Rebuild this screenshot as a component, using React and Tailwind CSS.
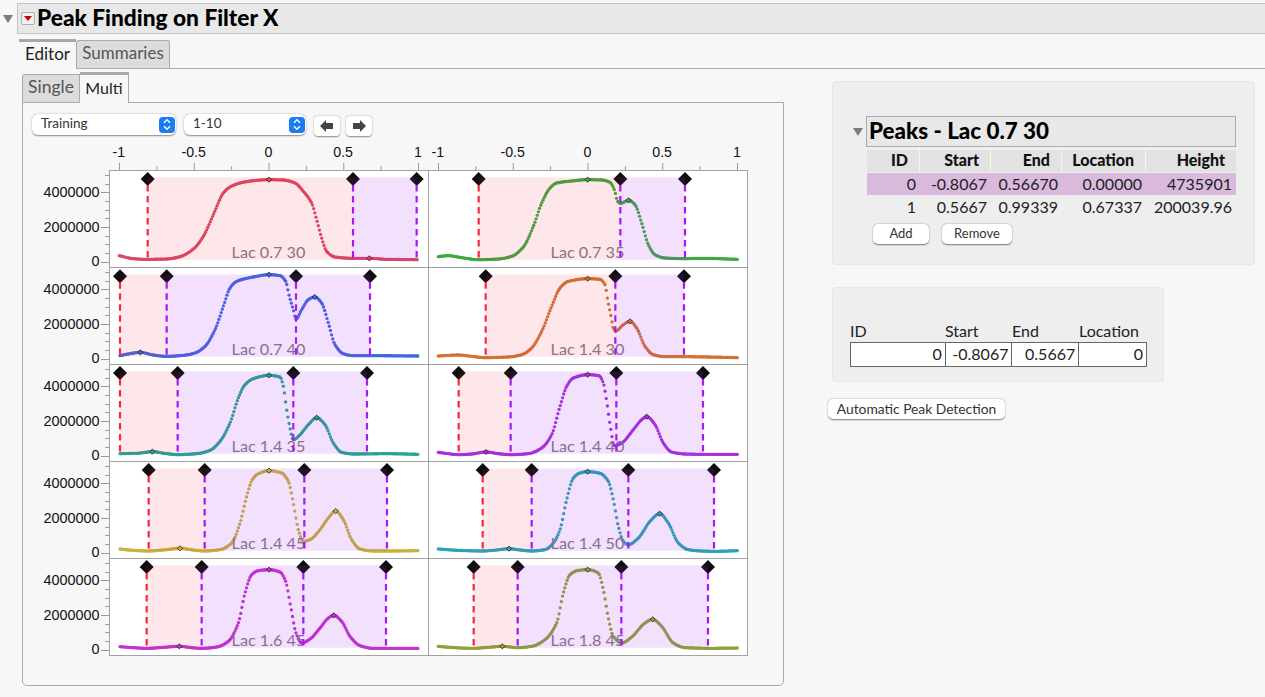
import React from 'react';

const PURPLE = '#a818f5';
const RED = '#f5283f';

// curve points traced at 3x from the plot area, ox/oy move them to the cell origin
const PLOTS = [
  {
    label: 'Lac 0.7 30', color: '#d84a64', ox: 267, oy: 31, marks: [383, 999, 1190], dy: 58,
    peaks: [[747, 60], [1048, 296]],
    pts: [[298,288],[340,297],[380,299],[440,298],[480,291],[520,268],[550,230],[580,165],[610,100],[630,82],[660,70],[700,63],[747,60],[790,61],[825,70],[850,95],[875,130],[890,180],[905,235],[920,275],[945,292],[1000,296],[1048,296],[1100,299],[1192,300]],
  },
  {
    label: 'Lac 0.7 35', color: '#3fa83f', ox: 9, oy: 31, marks: [161, 586, 780], dy: 58,
    peaks: [[488, 60], [611, 122]],
    pts: [[40,291],[70,288],[110,294],[161,300],[220,298],[260,290],[295,262],[325,200],[350,130],[375,85],[395,70],[440,64],[488,60],[530,61],[555,68],[568,90],[578,125],[586,131],[611,122],[630,135],[650,190],[670,255],[690,285],[720,295],[780,297],[830,296],[938,299]],
  },
  {
    label: 'Lac 0.7 40', color: '#4169dc', ox: 267, oy: 322, marks: [300, 440, 828, 1050], dy: 350,
    peaks: [[747, 345], [361, 578], [884, 412]],
    pts: [[300,588],[330,582],[361,578],[400,586],[440,590],[490,587],[525,580],[555,560],[585,510],[610,440],[630,385],[650,365],[700,352],[747,345],[780,348],[797,365],[808,410],[820,450],[828,478],[845,450],[865,420],[884,412],[905,430],[925,490],[945,555],[970,582],[1000,588],[1050,588],[1195,589]],
  },
  {
    label: 'Lac 1.4 30', color: '#d07434', ox: 9, oy: 322, marks: [182, 571, 777], dy: 350,
    peaks: [[488, 357], [615, 485]],
    pts: [[40,589],[100,586],[140,590],[182,594],[250,592],[290,585],[320,565],[350,515],[380,440],[405,385],[430,365],[488,357],[525,359],[540,375],[548,420],[558,470],[565,505],[572,514],[595,495],[615,485],[635,505],[660,560],[685,585],[720,591],[777,591],[850,592],[938,594]],
  },
  {
    label: 'Lac 1.4 35', color: '#26a594', ox: 267, oy: 13, marks: [300, 473, 820, 1041], dy: 40,
    peaks: [[747, 47], [397, 276], [890, 174]],
    pts: [[300,282],[350,281],[397,276],[440,282],[473,285],[530,282],[570,272],[600,245],[630,190],[655,115],[675,75],[700,57],[747,47],[780,52],[790,80],[800,150],[810,205],[820,240],[840,225],[865,195],[890,174],[915,195],[940,250],[965,278],[1000,283],[1100,282],[1195,284]],
  },
  {
    label: 'Lac 1.4 40', color: '#a433dc', ox: 9, oy: 13, marks: [101, 257, 574, 834], dy: 40,
    peaks: [[488, 45], [183, 277], [665, 171]],
    pts: [[40,278],[70,282],[101,285],[140,283],[183,277],[220,282],[257,285],[310,282],[350,265],[380,225],[405,140],[425,80],[445,55],[488,45],[522,48],[535,70],[545,125],[556,200],[568,258],[590,250],[625,210],[650,180],[665,171],[690,195],[715,250],[740,277],[780,283],[834,284],[938,284]],
  },
  {
    label: 'Lac 1.4 45', color: '#c6b43a', ox: 267, oy: 304, marks: [386, 554, 853, 1101], dy: 331,
    peaks: [[747, 333], [480, 566], [947, 454]],
    pts: [[300,568],[340,572],[386,574],[430,571],[480,566],[520,571],[554,574],[600,570],[635,550],[660,490],[680,410],[697,360],[715,342],[747,333],[785,340],[805,365],[820,430],[835,510],[850,545],[870,540],[900,510],[925,475],[947,454],[970,480],[995,540],[1020,568],[1060,574],[1101,574],[1195,573]],
  },
  {
    label: 'Lac 1.4 50', color: '#2ba4b4', ox: 9, oy: 304, marks: [173, 320, 610, 867], dy: 331,
    peaks: [[488, 336], [252, 567], [704, 462]],
    pts: [[40,568],[100,572],[173,574],[215,571],[252,567],[285,571],[320,574],[360,570],[385,550],[405,510],[425,420],[445,355],[465,340],[488,336],[525,341],[550,365],[565,420],[580,500],[595,545],[610,555],[640,535],[675,485],[704,462],[730,490],[760,550],[790,570],[830,574],[867,575],[938,573]],
  },
  {
    label: 'Lac 1.6 45', color: '#c433cc', ox: 267, oy: 595, marks: [380, 545, 850, 1098], dy: 622,
    peaks: [[747, 630], [478, 860], [941, 767]],
    pts: [[300,861],[340,864],[380,866],[430,863],[478,860],[515,864],[545,866],[590,862],[625,845],[655,790],[675,700],[695,645],[715,633],[747,630],[780,637],[797,665],[812,740],[828,820],[845,850],[870,838],[900,805],[925,775],[941,767],[965,785],[990,830],[1020,858],[1060,866],[1195,866]],
  },
  {
    label: 'Lac 1.8 45', color: '#8ca43a', ox: 9, oy: 595, marks: [146, 278, 589, 849], dy: 622,
    peaks: [[488, 630], [232, 860], [683, 779]],
    pts: [[40,860],[90,864],[146,866],[190,863],[232,860],[278,864],[320,860],[360,840],[395,790],[415,700],[435,645],[460,632],[488,630],[520,640],[535,690],[550,775],[565,830],[590,850],[620,832],[660,790],[683,779],[710,800],[745,850],[780,864],[849,866],[938,865]],
  },
];

// monotone cubic, sampled about once per pixel so steep parts break up into dots
function sampleCurve(pts) {
  const n = pts.length;
  const slopes = [];
  for (let i = 0; i < n - 1; i++) {
    slopes.push((pts[i + 1][1] - pts[i][1]) / (pts[i + 1][0] - pts[i][0]));
  }
  const tan = pts.map((_, i) => {
    if (i === 0) return slopes[0];
    if (i === n - 1) return slopes[n - 2];
    if (slopes[i - 1] * slopes[i] <= 0) return 0;
    return (2 * slopes[i - 1] * slopes[i]) / (slopes[i - 1] + slopes[i]);
  });
  const out = [];
  let seg = 0;
  for (let x = pts[0][0]; x <= pts[n - 1][0]; x += 1.15) {
    while (seg < n - 2 && x > pts[seg + 1][0]) seg++;
    const h = pts[seg + 1][0] - pts[seg][0];
    const t = (x - pts[seg][0]) / h;
    const y =
      (2 * t ** 3 - 3 * t ** 2 + 1) * pts[seg][1] +
      (t ** 3 - 2 * t ** 2 + t) * h * tan[seg] +
      (-2 * t ** 3 + 3 * t ** 2) * pts[seg + 1][1] +
      (t ** 3 - t ** 2) * h * tan[seg + 1];
    out.push([x, y]);
  }
  return out;
}

function Plot({ plot }) {
  const px = (x) => (x - plot.ox) / 3;
  const py = (y) => (y - plot.oy) / 3;
  const xs = plot.marks.map(px);
  const dy = py(plot.dy);
  const raw = plot.pts.map(([x, y]) => [x / 3, y / 3]);
  const dots = sampleCurve(raw).map(([x, y], i) => (
    <circle key={i} cx={x - plot.ox / 3} cy={y - plot.oy / 3} r="1.65" fill={plot.color} />
  ));
  return (
    <svg width="319" height="97" className="block overflow-visible bg-white">
      {dots}
      {xs.map((x) => (
        <polygon key={x} points={`${x - 7},${dy} ${x},${dy - 7} ${x + 7},${dy} ${x},${dy + 7}`} fill="#0d0d0d" />
      ))}
      <text x="159.5" y="88" textAnchor="middle" className="[font-family:Lato,sans-serif]" fontSize="16.2" fill="#857a86">{plot.label}</text>
      <rect x={xs[0]} y="7.4" width={xs[1] - xs[0]} height="82.4" fill="#f5283f" fillOpacity="0.11" />
      {xs.slice(1, -1).map((x, i) => (
        <rect key={x} x={x} y="7.4" width={xs[i + 2] - x} height="82.4" fill="#a020f0" fillOpacity="0.14" />
      ))}
      {xs.map((x, i) => (
        <line key={x} x1={x} x2={x} y1={dy + 6} y2="91.5" stroke={i === 0 ? RED : PURPLE} strokeWidth="2.2" strokeDasharray="6.5 4.5" />
      ))}
      {plot.peaks.map(([x, y]) => (
        <polygon key={x} points={`${px(x) - 2.6},${py(y)} ${px(x)},${py(y) - 2.6} ${px(x) + 2.6},${py(y)} ${px(x)},${py(y) + 2.6}`} fill={plot.color} stroke="#222" strokeWidth="0.8" />
      ))}
      <rect x="0.5" y="0.5" width="319" height="97" fill="none" stroke="#a3a3a3" />
    </svg>
  );
}

function XAxis() {
  const ticks = [-1, -0.75, -0.5, -0.25, 0, 0.25, 0.5, 0.75, 1];
  return (
    <svg width="319" height="30" className="block overflow-visible">
      {ticks.map((t) => {
        const x = 10.5 + (t + 1) * 149.5;
        const major = t * 2 === Math.round(t * 2);
        return (
          <g key={t}>
            <line x1={x} x2={x} y1={major ? 23 : 26} y2="30" stroke="#999" />
            {major && (
              <text x={x - 0.6} y="16.5" textAnchor="middle" fontSize="14.2" fill="#111" className="[font-family:'Liberation_Sans',sans-serif]">{t}</text>
            )}
          </g>
        );
      })}
    </svg>
  );
}

function YAxis() {
  const rows = [0, 1, 2, 3, 4];
  return (
    <svg width="70" height="486" className="block overflow-visible">
      {rows.map((r) => {
        const y0 = r * 97 + 91.5;
        const ticks = [];
        for (let i = 0; i <= 10; i++) {
          const y = Math.round(y0 - i * 8.65) + 0.5;
          ticks.push(<line key={i} x1={i % 4 === 0 ? 62 : 66} x2="70" y1={y} y2={y} stroke="#999" />);
        }
        return (
          <g key={r}>
            {ticks}
            {['0', '2000000', '4000000'].map((label, i) => (
              <text key={label} x="60.5" y={y0 - i * 34.7 + 4.8} textAnchor="end" fontSize="14.4" fill="#111" className="[font-family:'Liberation_Sans',sans-serif]">{label}</text>
            ))}
          </g>
        );
      })}
    </svg>
  );
}

function Disclosure({ className }) {
  return (
    <svg width="10" height="8" viewBox="0 0 10 8" className={className}>
      <polygon points="0,0 10,0 5,8" fill="#7b7b7b" />
    </svg>
  );
}

function Select({ value, width }) {
  return (
    <div className={`flex h-[21px] items-center justify-between rounded-[6px] bg-white pl-[9px] pr-[1px] text-[13.5px] text-[#333] shadow-[0_0.5px_1.5px_rgba(0,0,0,0.45)] ${width}`}>
      <span className="-mt-[2px]">{value}</span>
      <span className="flex h-[16px] w-[16px] items-center justify-center rounded-[4px] bg-[#1a7bf5]">
        <svg width="8" height="13" viewBox="0 0 8 13" fill="none" stroke="white" strokeWidth="1.4">
          <path d="M1 4.8 4 1.8l3 3M1 8.2l3 3 3-3" />
        </svg>
      </span>
    </div>
  );
}

function ArrowBtn({ dir }) {
  return (
    <button className="flex h-[20px] w-[26px] items-center justify-center rounded-[4px] bg-white shadow-[0_0.5px_1.5px_rgba(0,0,0,0.45)]">
      <svg width="14" height="12" viewBox="0 0 14 12">
        <polygon points={dir === 'left' ? '0,6 6,0 6,3 13,3 13,9 6,9 6,12' : '14,6 8,0 8,3 1,3 1,9 8,9 8,12'} fill="#444" />
      </svg>
    </button>
  );
}

function PushBtn({ children, className }) {
  return (
    <button className={`h-[20px] rounded-[5px] bg-white text-center text-[#333] shadow-[0_0.5px_1.5px_rgba(0,0,0,0.5)] ${className}`}>
      {children}
    </button>
  );
}

const PEAK_COLS = 'grid grid-cols-[53px_71px_71px_84px_90px]';

function PeaksPanel() {
  const head = ['ID', 'Start', 'End', 'Location', 'Height'];
  const rows = [
    ['0', '-0.8067', '0.56670', '0.00000', '4735901'],
    ['1', '0.5667', '0.99339', '0.67337', '200039.96'],
  ];
  return (
    <div className="h-[184px] w-[423px] rounded-[4px] border border-[#e6e6e6] bg-[#eeeeee] pt-[34px]">
      <div className="flex items-center pl-[20px]">
        <Disclosure className="mr-[3px]" />
        <div className="flex h-[31px] w-[370px] items-center border border-[#ababab] bg-[#e8e8e8] pb-[1px] pl-[2px] text-[22.4px] font-black text-black">
          Peaks - Lac 0.7 30
        </div>
      </div>
      <div className="ml-[34px] mt-[3px] w-[369px] text-[16px]">
        <div className={PEAK_COLS}>
          {head.map((h, i) => (
            <div key={h} className={`h-[22px] bg-[#e2e2e2] pr-[11px] text-right font-black leading-[20px] text-[#111] ${i < 4 ? 'border-r border-[#f5f5f5]' : ''}`}>
              {h}
            </div>
          ))}
        </div>
        {rows.map((row, r) => (
          <div key={r} className={`${PEAK_COLS} mt-[1px] h-[22px] ${r === 0 ? 'bg-[#d9b9dc]' : ''}`}>
            {row.map((v, i) => (
              <div key={i} className="pr-[4px] text-right leading-[22px] text-[#222]">{v}</div>
            ))}
          </div>
        ))}
      </div>
      <div className="ml-[40px] mt-[6px] flex gap-[13px]">
        <PushBtn className="w-[56px] text-[13px]">Add</PushBtn>
        <PushBtn className="w-[70px] text-[13px]">Remove</PushBtn>
      </div>
    </div>
  );
}

function EditPanel() {
  const cols = [['ID', '0', 'w-[95px]'], ['Start', '-0.8067', 'w-[67px]'], ['End', '0.5667', 'w-[67px]'], ['Location', '0', 'w-[67px]']];
  return (
    <div className="mt-[22px] h-[95px] w-[332px] rounded-[4px] border border-[#e6e6e6] bg-[#eeeeee] pl-[17px] pt-[34px]">
      <div className="flex h-[20px] text-[16px] leading-[18px] text-[#222]">
        {cols.map(([h, , w]) => (
          <div key={h} className={w}>{h}</div>
        ))}
      </div>
      <div className="flex h-[25px] w-[297px] border border-[#666] bg-white text-[16px] leading-[22px] text-[#222]">
        {cols.map(([h, v, w], i) => (
          <div key={h} className={`${w} pr-[3px] text-right ${i < 3 ? 'border-r border-[#666]' : ''}`}>{v}</div>
        ))}
      </div>
    </div>
  );
}

export default function App() {
  return (
    <div className="h-[697px] w-[1265px] overflow-hidden bg-[#f7f7f7] pt-[3px] [font-family:Lato,sans-serif]">
      <div className="flex items-center">
        <Disclosure className="ml-[3px] mr-[4px] mt-[1px]" />
        <div className="flex h-[31px] flex-1 items-center border border-r-0 border-[#c4c4c4] bg-[#e8e8e8] pl-[3px]">
          <span className="mr-[2px] flex h-[13px] w-[14px] items-center justify-center rounded-[2px] border border-[#b0b0b0] bg-[#f0f0f0]">
            <svg width="8" height="5" viewBox="0 0 8 5"><polygon points="0,0 8,0 4,5" fill="#c80000" /></svg>
          </span>
          <span className="pb-[1px] text-[22.7px] font-black text-black">Peak Finding on Filter X</span>
        </div>
      </div>

      <div className="ml-[19px] mt-[5px] flex h-[30px] items-end border-b border-[#ababab]">
        <div className="-mb-px flex h-[30px] w-[57px] items-center justify-center border-t-[3px] border-[#a8a8a8] bg-[#f7f7f7] pb-[3px] text-[17px] text-[#222]">Editor</div>
        <div className="flex h-[28px] w-[94px] items-center justify-center rounded-t-[3px] border border-b-0 border-[#ababab] bg-[#dcdcdc] pb-[3px] text-[17px] text-[#555]">Summaries</div>
      </div>

      <div className="flex items-start">
        <div className="ml-[22px] mt-[3px] w-[762px]">
          <div className="flex h-[30px] items-end">
            <div className="flex h-[28px] w-[58px] items-center justify-center rounded-tl-[3px] border border-b-0 border-[#ababab] bg-[#dcdcdc] pb-[3px] text-[17.5px] text-[#555]">Single</div>
            <div className="-mb-px flex h-[31px] w-[49px] items-center justify-center border-r border-t-[3px] border-[#ababab] bg-[#f7f7f7] pb-[3px] text-[16px] text-[#222]">Multi</div>
          </div>
          <div className="h-[584px] rounded-b-[5px] border border-[#ababab] pl-[9px] pt-[11px]">
            <div className="flex items-start gap-[8px]">
              <Select value="Training" width="w-[144px]" />
              <Select value="1-10" width="w-[122px]" />
              <div className="mt-[2px] flex gap-[6px]">
                <ArrowBtn dir="left" />
                <ArrowBtn dir="right" />
              </div>
            </div>
            <div className="ml-[7px] mt-[4px] grid grid-cols-[70px_319px_319px] grid-rows-[30px_486px]">
              <div />
              <XAxis />
              <XAxis />
              <YAxis />
              <div className="col-span-2 grid grid-cols-[319px_319px] grid-rows-[repeat(5,97px)]">
                {PLOTS.map((p) => (
                  <Plot key={p.label} plot={p} />
                ))}
              </div>
            </div>
          </div>
        </div>

        <div className="ml-[48px] mt-[12px] flex flex-col items-start">
          <PeaksPanel />
          <EditPanel />
          <PushBtn className="-ml-[4px] mt-[17px] w-[177px] text-[13.8px]">Automatic Peak Detection</PushBtn>
        </div>
      </div>
    </div>
  );
}
